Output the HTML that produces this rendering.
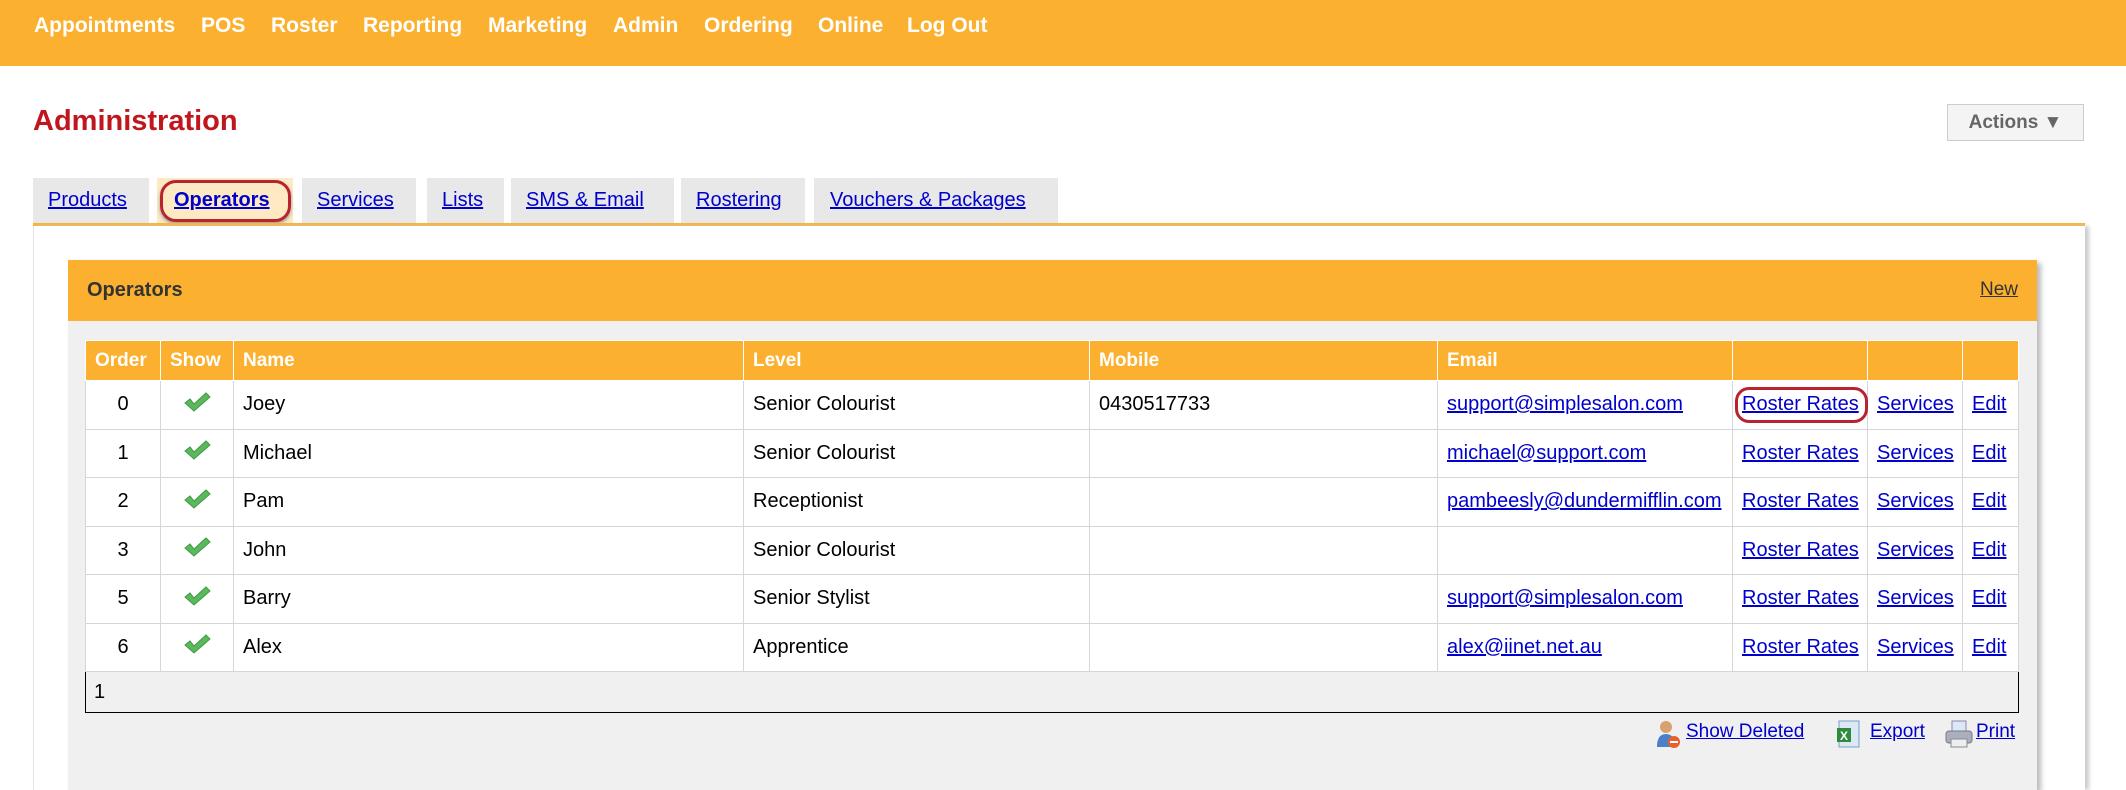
<!DOCTYPE html>
<html style="overflow:hidden;height:790px"><head><meta charset="utf-8"><style>
*{box-sizing:border-box;margin:0;padding:0}
body{width:2126px;height:790px;overflow:hidden;background:#fff;font-family:"Liberation Sans",Arial,sans-serif;position:relative}
.top{position:absolute;left:0;top:0;width:2126px;height:66px;background:#fbb12f}
.top span{position:absolute;top:14px;color:#fff;font-weight:bold;font-size:21px}
h1{position:absolute;left:33px;top:105px;font-size:29px;color:#c0161e;font-weight:bold}
.act{position:absolute;left:1947px;top:104px;width:137px;height:37px;border:1px solid #ccc;background:#f4f4f4;color:#666;font-weight:bold;font-size:19px;line-height:35px;text-align:center}
.tab{position:absolute;top:178px;height:46px;background:#e8e8e8;font-size:20px;line-height:44px;padding-left:15px}
.tab a{color:#0000cc;text-decoration:underline}
.line{position:absolute;left:33px;top:223px;width:2052px;height:3px;background:#fbb12f}
.cont{position:absolute;left:33px;top:226px;width:2052px;height:564px;border-left:1px solid #e4e4e4;box-shadow:4px 0 4px #ccc}
.panel{position:absolute;left:68px;top:260px;width:1969px;height:530px;background:#f0f0f0;box-shadow:4px 3px 5px #bbb}
.ph{position:absolute;left:0;top:0;width:100%;height:61px;background:#fbb12f}
.ph b{position:absolute;left:19px;top:19px;font-size:20px;color:#333}
.ph a{position:absolute;right:19px;top:19px;font-size:19px;color:#333;text-decoration:underline}
table{position:absolute;left:85px;top:340px;border-collapse:collapse;font-size:20px;table-layout:fixed}
th{background:#fbb12f;color:#fff;text-align:left;height:40px;padding-left:9px;border:1px solid #fff;font-size:19px}
td{background:#fff;height:48.5px;border:1px solid #d6d6d6;padding-left:9px;color:#000}
td a{color:#0000cc;text-decoration:underline}
td.c{text-align:center;padding-left:0}
tr.f td{background:#f0f0f0;border:1px solid #000;border-top:1px solid #d6d6d6;height:41px;padding-left:8px}
.bl{position:absolute;top:721px;font-size:19px}
.bl a{color:#0000cc;text-decoration:underline}
</style></head><body>
<div class="top">
<span style="left:34px">Appointments</span><span style="left:201px">POS</span><span style="left:271px">Roster</span><span style="left:363px">Reporting</span><span style="left:488px">Marketing</span><span style="left:613px">Admin</span><span style="left:704px">Ordering</span><span style="left:818px">Online</span><span style="left:907px">Log Out</span>
</div>
<h1>Administration</h1>
<div class="act">Actions ▼</div>
<div class="tab" style="left:33px;width:116px"><a>Products</a></div>
<div class="tab" style="left:157px;width:136px;background:#fde9c2;padding-left:17px"><div style="position:absolute;left:3px;top:2px;right:2px;bottom:2px;border:3px solid #b8232f;border-radius:16px;box-shadow:0 2px 3px #999"></div><a style="font-weight:bold">Operators</a></div>
<div class="tab" style="left:302px;width:114px"><a>Services</a></div>
<div class="tab" style="left:427px;width:77px"><a>Lists</a></div>
<div class="tab" style="left:511px;width:163px"><a>SMS &amp; Email</a></div>
<div class="tab" style="left:681px;width:124px"><a>Rostering</a></div>
<div class="tab" style="left:814px;width:244px;padding-left:16px"><a>Vouchers &amp; Packages</a></div>
<div class="line"></div>
<div class="cont"></div>
<div class="panel"><div class="ph"><b>Operators</b><a>New</a></div></div>
<table>
<colgroup><col style="width:75px"><col style="width:73px"><col style="width:510px"><col style="width:346px"><col style="width:348px"><col style="width:295px"><col style="width:135px"><col style="width:95px"><col style="width:56px"></colgroup>
<tr><th>Order</th><th>Show</th><th>Name</th><th>Level</th><th>Mobile</th><th>Email</th><th></th><th></th><th></th></tr>
<tr><td class="c">0</td><td class="c">CHK</td><td>Joey</td><td>Senior Colourist</td><td>0430517733</td><td><a>support@simplesalon.com</a></td><td style="position:relative"><div style="position:absolute;left:2px;top:6px;width:133px;height:36px;border:3px solid #b8232f;border-radius:14px"></div><a>Roster Rates</a></td><td><a>Services</a></td><td><a>Edit</a></td></tr>
<tr><td class="c">1</td><td class="c">CHK</td><td>Michael</td><td>Senior Colourist</td><td></td><td><a>michael@support.com</a></td><td><a>Roster Rates</a></td><td><a>Services</a></td><td><a>Edit</a></td></tr>
<tr><td class="c">2</td><td class="c">CHK</td><td>Pam</td><td>Receptionist</td><td></td><td><a>pambeesly@dundermifflin.com</a></td><td><a>Roster Rates</a></td><td><a>Services</a></td><td><a>Edit</a></td></tr>
<tr><td class="c">3</td><td class="c">CHK</td><td>John</td><td>Senior Colourist</td><td></td><td></td><td><a>Roster Rates</a></td><td><a>Services</a></td><td><a>Edit</a></td></tr>
<tr><td class="c">5</td><td class="c">CHK</td><td>Barry</td><td>Senior Stylist</td><td></td><td><a>support@simplesalon.com</a></td><td><a>Roster Rates</a></td><td><a>Services</a></td><td><a>Edit</a></td></tr>
<tr><td class="c">6</td><td class="c">CHK</td><td>Alex</td><td>Apprentice</td><td></td><td><a>alex@iinet.net.au</a></td><td><a>Roster Rates</a></td><td><a>Services</a></td><td><a>Edit</a></td></tr>
<tr class="f"><td colspan="9">1</td></tr>
</table>
<svg style="position:absolute;left:1654px;top:719px" width="28" height="30"><circle cx="12" cy="8" r="6" fill="#d9a070"/><path d="M3 28 Q3 15 12 15 Q21 15 21 28Z" fill="#4a80c8"/><circle cx="20" cy="23" r="6" fill="#e8602a"/><rect x="16" y="22" width="8" height="2" fill="#fff"/></svg>
<div class="bl" style="left:1686px"><a>Show Deleted</a></div>
<svg style="position:absolute;left:1836px;top:719px" width="26" height="30"><rect x="3" y="2" width="20" height="26" fill="#dce8f4" stroke="#7aa0c8"/><rect x="1" y="9" width="14" height="14" fill="#2e8b3e"/><text x="4" y="21" font-size="12" fill="#fff" font-family="Liberation Sans" font-weight="bold">X</text></svg>
<div class="bl" style="left:1870px"><a>Export</a></div>
<svg style="position:absolute;left:1944px;top:719px" width="30" height="30"><rect x="8" y="2" width="14" height="12" fill="#dde8f6" stroke="#88a"/><rect x="2" y="12" width="26" height="12" rx="3" fill="#aab0bb" stroke="#778"/><rect x="7" y="20" width="16" height="8" fill="#eee" stroke="#889"/></svg>
<div class="bl" style="left:1976px"><a>Print</a></div>
<script>
document.querySelectorAll('td').forEach(function(t){if(t.textContent==='CHK'){t.innerHTML='<svg width="30" height="24" viewBox="0 0 30 24"><path d="M3 13 L8 9 L12 14 L24 3 L28 7 L12 21 Z" fill="#5cb85c" stroke="#3f9a46" stroke-width="1"/></svg>';}});
</script>
</body></html>
